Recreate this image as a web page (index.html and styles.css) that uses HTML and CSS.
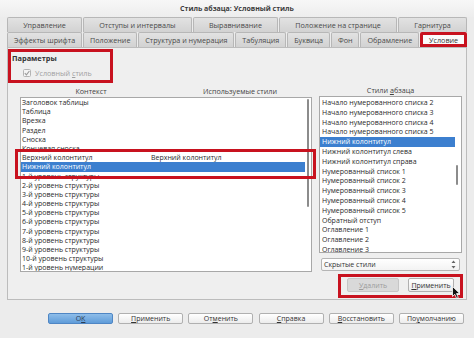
FILE: index.html
```html
<!DOCTYPE html>
<html lang="ru">
<head>
<meta charset="utf-8">
<title>Стиль абзаца: Условный стиль</title>
<link rel="stylesheet" href="styles.css">
</head>
<body>
<div class="window">
  <div class="titlebar">Стиль абзаца: Условный стиль</div>
  <div class="tabs">
    <div class="tabrow">
      <div class="tab">Управление</div>
      <div class="tab">Отступы и интервалы</div>
      <div class="tab">Выравнивание</div>
      <div class="tab">Положение на странице</div>
      <div class="tab">Гарнитура</div>
    </div>
    <div class="tabrow">
      <div class="tab">Эффекты шрифта</div>
      <div class="tab">Положение</div>
      <div class="tab">Структура и нумерация</div>
      <div class="tab">Табуляция</div>
      <div class="tab">Буквица</div>
      <div class="tab">Фон</div>
      <div class="tab">Обрамление</div>
      <div class="tab active mark">Условие</div>
    </div>
  </div>
  <div class="panel">
    <div class="params mark">
      <div class="params-title">Параметры</div>
      <div class="check">
        <svg class="checkbox" width="8" height="8" viewBox="0 0 8 8"><rect x="0.5" y="0.5" width="7" height="7" rx="1" fill="#f4f4f4" stroke="#b4b4b4"/><path d="M1.8 4.2 L3.4 5.8 L6.4 2" fill="none" stroke="#9a9a9a" stroke-width="1.1"/></svg>
        <span>Условный <u>с</u>тиль</span>
      </div>
    </div>
    <div class="columns">
      <div class="ctx">
        <div class="heads"><span class="h1">Контекст</span><span class="h2">Используемые стили</span></div>
        <div class="table">
          <div class="row"><span class="c1">Заголовок таблицы</span></div>
          <div class="row"><span class="c1">Таблица</span></div>
          <div class="row"><span class="c1">Врезка</span></div>
          <div class="row"><span class="c1">Раздел</span></div>
          <div class="row"><span class="c1">Сноска</span></div>
          <div class="row"><span class="c1">Концевая сноска</span></div>
          <div class="row"><span class="c1">Верхний колонтитул</span><span class="c2">Верхний колонтитул</span></div>
          <div class="row sel"><span class="c1">Нижний колонтитул</span></div>
          <div class="row"><span class="c1">1-й уровень структуры</span></div>
          <div class="row"><span class="c1">2-й уровень структуры</span></div>
          <div class="row"><span class="c1">3-й уровень структуры</span></div>
          <div class="row"><span class="c1">4-й уровень структуры</span></div>
          <div class="row"><span class="c1">5-й уровень структуры</span></div>
          <div class="row"><span class="c1">6-й уровень структуры</span></div>
          <div class="row"><span class="c1">7-й уровень структуры</span></div>
          <div class="row"><span class="c1">8-й уровень структуры</span></div>
          <div class="row"><span class="c1">9-й уровень структуры</span></div>
          <div class="row"><span class="c1">10-й уровень структуры</span></div>
          <div class="row"><span class="c1">1-й уровень нумерации</span></div>
          <div class="thumb thumb-ctx"></div>
        </div>
      </div>
      <div class="styles">
        <div class="head">Стили <u>а</u>бзаца</div>
        <div class="list">
          <div class="item">Начало нумерованного списка 2</div>
          <div class="item">Начало нумерованного списка 3</div>
          <div class="item">Начало нумерованного списка 4</div>
          <div class="item">Начало нумерованного списка 5</div>
          <div class="item sel">Нижний колонтитул</div>
          <div class="item">Нижний колонтитул слева</div>
          <div class="item">Нижний колонтитул справа</div>
          <div class="item">Нумерованный список 1</div>
          <div class="item">Нумерованный список 2</div>
          <div class="item">Нумерованный список 3</div>
          <div class="item">Нумерованный список 4</div>
          <div class="item">Нумерованный список 5</div>
          <div class="item">Обратный отступ</div>
          <div class="item">Оглавление 1</div>
          <div class="item">Оглавление 2</div>
          <div class="item">Оглавление 3</div>
          <div class="thumb thumb-list"></div>
        </div>
        <div class="select">
          <span>Скрытые стили</span>
          <svg class="spin" width="5" height="9" viewBox="0 0 5 9"><path d="M2.5 0.5 L4.5 3 L0.5 3 Z M0.5 6 L4.5 6 L2.5 8.5 Z" fill="#666"/></svg>
        </div>
        <div class="actions mark">
          <div class="btn disabled"><u>У</u>далить</div>
          <div class="btn"><u>П</u>рименить</div>
        </div>
      </div>
    </div>
    <div class="mark row-mark"></div>
  </div>
  <div class="footer">
    <div class="btn big ok">O<u>K</u></div>
    <div class="btn big"><u>П</u>рименить</div>
    <div class="btn big">От<u>м</u>енить</div>
    <div class="btn big"><u>С</u>правка</div>
    <div class="btn big"><u>В</u>осстановить</div>
    <div class="btn big">По <u>у</u>молчанию</div>
  </div>
  <svg class="cursor" width="9" height="13" viewBox="0 0 9 13"><path d="M0.5 0.5 L0.5 10.5 L2.8 8.3 L4.6 12.3 L6.3 11.5 L4.5 7.6 L7.8 7.6 Z" fill="#111" stroke="#fff" stroke-width="0.8"/></svg>
</div>
</body>
</html>
```

FILE: styles.css
```css
* {
  box-sizing: border-box;
  margin: 0;
  padding: 0;
}

html, body {
  width: 474px;
  height: 338px;
  overflow: hidden;
}

body {
  background: #ebebeb;
  font-family: "Open Sans", "Noto Sans", sans-serif;
  font-size: 7px;
  color: #333;
}

u {
  text-decoration: underline;
  text-underline-offset: 1px;
}

.window {
  position: relative;
  width: 474px;
  height: 338px;
  background: #ececec;
}

.titlebar {
  height: 17px;
  display: flex;
  align-items: center;
  justify-content: center;
  font-weight: bold;
  color: #3c3c3c;
  background: linear-gradient(#f7f7f7, #ededed);
}

.tabs {
  padding: 0 7px;
}

.tabrow {
  display: flex;
  height: 15px;
}

.tab {
  flex: 1 1 auto;
  display: flex;
  align-items: center;
  justify-content: center;
  white-space: nowrap;
  font-size: 7.2px;
  color: #4a4a4a;
  border: 1px solid #b7b7b7;
  border-bottom: none;
  border-radius: 2px 2px 0 0;
  background: linear-gradient(#e2e2e2, #d2d2d2);
  margin-right: 1px;
}

.tab:last-child {
  margin-right: 0;
}

.tab.active {
  background: #fbfbfb;
  color: #333;
}

.mark {
  border: 3px solid #c8121f;
}

.tab.active.mark {
  border: 3px solid #c8121f;
}

.panel {
  position: relative;
  margin: 0 7px;
  height: 253px;
  border: 1px solid #bcbcbc;
  background: #efefef;
}

.params {
  margin-top: 1px;
  width: 105px;
  height: 34px;
  padding: 0 0 0 1px;
}

.params-title {
  font-weight: bold;
  font-size: 7.4px;
  height: 10px;
  line-height: 10px;
  margin-top: 1px;
  color: #333;
}

.check {
  display: flex;
  align-items: center;
  gap: 4px;
  margin-top: 6px;
  padding-left: 11px;
  font-size: 7.2px;
  color: #a0a0a0;
  height: 8px;
}

.checkbox {
  flex: none;
}

.columns {
  display: flex;
  gap: 7px;
  margin-top: 1px;
  padding-left: 12px;
}

.ctx {
  width: 292px;
  flex: none;
}

.heads {
  display: grid;
  grid-template-columns: 142px 150px;
  height: 13px;
  align-items: center;
  font-size: 7.2px;
  color: #444;
}

.heads span {
  text-align: center;
}

.heads .h2 {
  padding-left: 6px;
}

.table {
  position: relative;
  height: 175px;
  border: 1px solid #a8a8a8;
  background: #fff;
  overflow: hidden;
}

.row {
  display: flex;
  height: 9.19px;
  line-height: 9.19px;
  margin-right: 6px;
  white-space: nowrap;
  font-size: 7px;
  color: #2a2a2a;
}

.row .c1 {
  width: 130px;
  padding-left: 1px;
}

.row.sel,
.item.sel {
  background: #3c7fcf;
  color: #fff;
}

.thumb {
  position: absolute;
  width: 2px;
  border-radius: 1px;
  background: #8c8c8c;
}

.thumb-ctx {
  right: 2px;
  top: 1px;
  height: 108px;
}

.styles {
  width: 143px;
  flex: none;
  display: flex;
  flex-direction: column;
}

.head {
  height: 12px;
  line-height: 12px;
  text-align: center;
  font-size: 7.2px;
  color: #444;
}

.list {
  position: relative;
  height: 157px;
  border: 1px solid #a8a8a8;
  background: #fff;
  overflow: hidden;
  padding-top: 1px;
}

.item {
  height: 9.8px;
  line-height: 9.8px;
  padding-left: 2px;
  margin-right: 6px;
  white-space: nowrap;
  font-size: 7px;
  color: #2a2a2a;
}

.thumb-list {
  right: 3px;
  top: 68px;
  height: 20px;
}

.select {
  margin: 5px 2px 0 2px;
  height: 13px;
  border: 1px solid #b5b5b5;
  border-radius: 2px;
  background: linear-gradient(#ffffff, #f3f3f3);
  display: flex;
  align-items: center;
  justify-content: space-between;
  padding: 0 3px 0 2px;
  font-size: 7px;
  color: #333;
}

.actions {
  margin: 3px -1px 0 19px;
  height: 24px;
  display: flex;
  gap: 9px;
  padding: 1px 0 0 6px;
}

.btn {
  display: flex;
  align-items: center;
  justify-content: center;
  height: 14px;
  border: 1px solid #b0b0b0;
  border-radius: 2px;
  background: linear-gradient(#ffffff, #ececec);
  color: #333;
  white-space: nowrap;
}

.actions .btn {
  width: 52px;
}

.actions .btn + .btn {
  width: 46px;
}

.btn.disabled {
  background: #d9d9d9;
  border-color: #c6c6c6;
  color: #9c9c9c;
}

.row-mark {
  position: absolute;
  left: 7px;
  top: 101px;
  width: 301px;
  height: 30px;
}

.footer {
  display: flex;
  gap: 5.2px;
  padding: 13px 0 0 48px;
}

.btn.big {
  width: 65px;
  height: 11px;
  font-size: 7px;
}

.btn.ok {
  background: linear-gradient(#8ebde9, #5f9cd9);
  border-color: #4f86c4;
  color: #2d3e55;
}

.cursor {
  position: absolute;
  left: 452px;
  top: 286px;
}
```
